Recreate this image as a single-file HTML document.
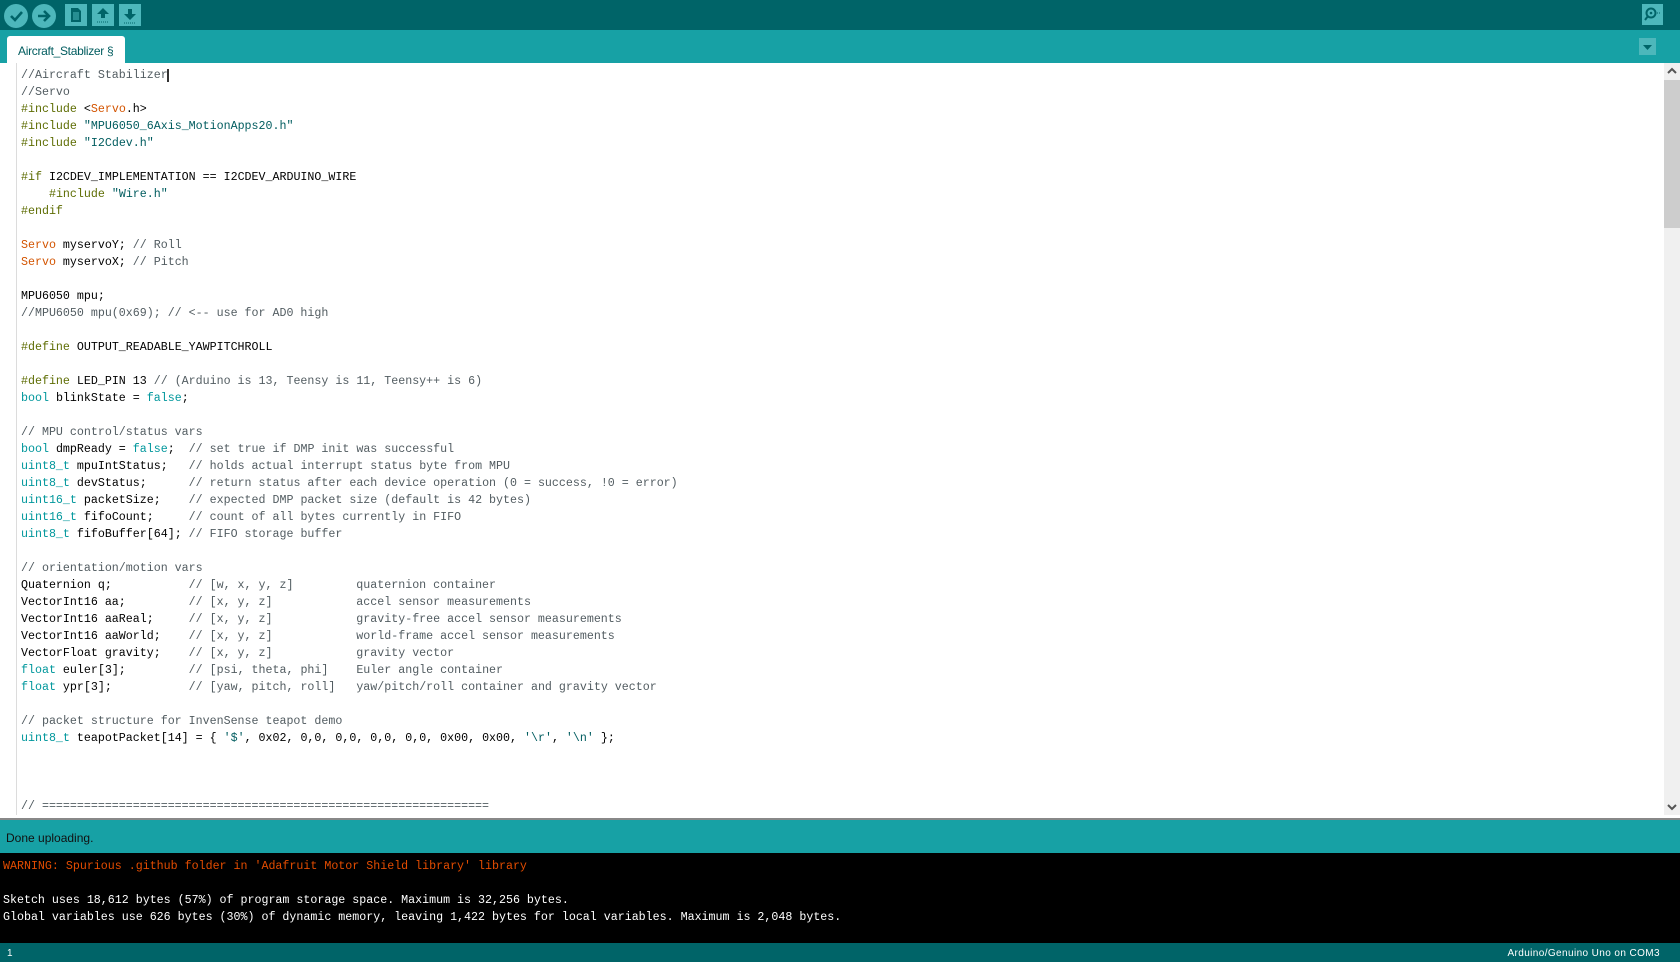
<!DOCTYPE html>
<html><head><meta charset="utf-8"><style>
*{margin:0;padding:0;box-sizing:border-box}
body{width:1680px;height:962px;overflow:hidden;background:#fff;font-family:"Liberation Sans",sans-serif;position:relative}
.tb{position:absolute;left:0;top:0;width:1680px;height:30px;background:#006468}
.btn{position:absolute;background:#4db7bb}
.tabs{position:absolute;left:0;top:30px;width:1680px;height:33px;background:#17a1a5}
.tab{position:absolute;left:7px;top:6px;width:118px;height:27px;background:#fff;border-radius:3px 3px 0 0;font-size:12px;color:#005c5f;padding:8px 0 0 11px;letter-spacing:-0.3px}
.ed{position:absolute;left:0;top:63px;width:1664px;height:752px;overflow:hidden}
.gut{position:absolute;left:16px;top:0;width:1px;height:752px;background:#dcdcdc}
pre{position:absolute;left:21px;top:4px;font-family:"Liberation Mono",monospace;font-size:11.65px;line-height:17px;color:#000}
.c{color:#525c61}.p{color:#5e6d03}.k{color:#00979c}.o{color:#d35400}.s{color:#005c5f}
.sb{position:absolute;left:1664px;top:63px;width:16px;height:752px;background:#f0f0f0}
.st{position:absolute;left:0;top:818px;width:1680px;height:35px;background:#17a1a5;border-top:2px solid #888;font-size:12px;color:#111;padding:11px 0 0 6px}
.con{position:absolute;left:0;top:853px;width:1680px;height:90px;background:#000}
.con pre{left:3px;top:5px;color:#fff}
.bb{position:absolute;left:0;top:943px;width:1680px;height:19px;background:#006468;color:#fff;font-size:10px}
</style></head><body>
<div class="tb">
<div class="btn" style="left:4px;top:4px;width:24px;height:24px;border-radius:50%"><svg width="24" height="24"><path d="M7 12l4 4 7-8" stroke="#006468" stroke-width="2.6" fill="none"/></svg></div>
<div class="btn" style="left:32px;top:4px;width:24px;height:24px;border-radius:50%"><svg width="24" height="24"><path d="M6 12h10M12 7l5 5-5 5" stroke="#006468" stroke-width="2.6" fill="none"/></svg></div>
<div class="btn" style="left:65px;top:4px;width:22px;height:22px"><svg width="22" height="22"><path d="M6 4h7l3 3v11H6z" fill="#006468"/><path d="M8 9h6M8 11h6M8 13h6M8 15h6" stroke="#4db7bb" stroke-width="1"/></svg></div>
<div class="btn" style="left:92px;top:4px;width:22px;height:22px"><svg width="22" height="22"><path d="M11 4l6 6h-4v4H9v-4H5z" fill="#006468"/><path d="M5 18h12" stroke="#006468" stroke-dasharray="1 1"/></svg></div>
<div class="btn" style="left:119px;top:4px;width:22px;height:22px"><svg width="22" height="22"><path d="M11 16l6-6h-4V5H9v5H5z" fill="#006468"/><path d="M5 19h12" stroke="#006468" stroke-dasharray="1 1"/></svg></div>
<div class="btn" style="left:1642px;top:4px;width:21px;height:21px"><svg width="21" height="21"><circle cx="9" cy="9" r="4.5" stroke="#006468" stroke-width="2" fill="none"/><circle cx="9" cy="9" r="1.3" fill="#006468"/><path d="M6 12l-3 4" stroke="#006468" stroke-width="2"/><path d="M15 9h4" stroke="#006468" stroke-dasharray="1 1"/></svg></div>
</div>
<div class="tabs"><div class="tab">Aircraft_Stablizer §</div>
<div class="btn" style="left:1639px;top:8px;width:17px;height:17px"><svg width="17" height="17"><path d="M4 7h9l-4.5 5z" fill="#006468"/></svg></div></div>
<div class="ed"><div class="gut"></div>
<pre><span class="c">//Aircraft Stabilizer</span><span style="border-left:2px solid #333;margin-left:-1px">&#8203;</span>
<span class="c">//Servo</span>
<span class="p">#include</span> &lt;<span class="o">Servo</span>.h&gt;
<span class="p">#include</span> <span class="s">"MPU6050_6Axis_MotionApps20.h"</span>
<span class="p">#include</span> <span class="s">"I2Cdev.h"</span>

<span class="p">#if</span> I2CDEV_IMPLEMENTATION == I2CDEV_ARDUINO_WIRE
    <span class="p">#include</span> <span class="s">"Wire.h"</span>
<span class="p">#endif</span>

<span class="o">Servo</span> myservoY; <span class="c">// Roll</span>
<span class="o">Servo</span> myservoX; <span class="c">// Pitch</span>

MPU6050 mpu;
<span class="c">//MPU6050 mpu(0x69); // &lt;-- use for AD0 high</span>

<span class="p">#define</span> OUTPUT_READABLE_YAWPITCHROLL

<span class="p">#define</span> LED_PIN 13 <span class="c">// (Arduino is 13, Teensy is 11, Teensy++ is 6)</span>
<span class="k">bool</span> blinkState = <span class="k">false</span>;

<span class="c">// MPU control/status vars</span>
<span class="k">bool</span> dmpReady = <span class="k">false</span>;  <span class="c">// set true if DMP init was successful</span>
<span class="k">uint8_t</span> mpuIntStatus;   <span class="c">// holds actual interrupt status byte from MPU</span>
<span class="k">uint8_t</span> devStatus;      <span class="c">// return status after each device operation (0 = success, !0 = error)</span>
<span class="k">uint16_t</span> packetSize;    <span class="c">// expected DMP packet size (default is 42 bytes)</span>
<span class="k">uint16_t</span> fifoCount;     <span class="c">// count of all bytes currently in FIFO</span>
<span class="k">uint8_t</span> fifoBuffer[64]; <span class="c">// FIFO storage buffer</span>

<span class="c">// orientation/motion vars</span>
Quaternion q;           <span class="c">// [w, x, y, z]         quaternion container</span>
VectorInt16 aa;         <span class="c">// [x, y, z]            accel sensor measurements</span>
VectorInt16 aaReal;     <span class="c">// [x, y, z]            gravity-free accel sensor measurements</span>
VectorInt16 aaWorld;    <span class="c">// [x, y, z]            world-frame accel sensor measurements</span>
VectorFloat gravity;    <span class="c">// [x, y, z]            gravity vector</span>
<span class="k">float</span> euler[3];         <span class="c">// [psi, theta, phi]    Euler angle container</span>
<span class="k">float</span> ypr[3];           <span class="c">// [yaw, pitch, roll]   yaw/pitch/roll container and gravity vector</span>

<span class="c">// packet structure for InvenSense teapot demo</span>
<span class="k">uint8_t</span> teapotPacket[14] = { <span class="s">'$'</span>, 0x02, 0,0, 0,0, 0,0, 0,0, 0x00, 0x00, <span class="s">'\r'</span>, <span class="s">'\n'</span> };



<span class="c">// ================================================================</span></pre>
</div>
<div class="sb"><svg width="16" height="16" style="position:absolute;top:0"><path d="M4 10l4-4 4 4" stroke="#555" stroke-width="2" fill="none"/></svg>
<div style="position:absolute;left:0;top:17px;width:16px;height:148px;background:#cdcdcd"></div>
<svg width="16" height="16" style="position:absolute;top:736px"><path d="M4 6l4 4 4-4" stroke="#555" stroke-width="2" fill="none"/></svg></div>
<div class="st">Done uploading.</div>
<div class="con"><pre><span style="color:#e34c00">WARNING: Spurious .github folder in 'Adafruit Motor Shield library' library</span>

Sketch uses 18,612 bytes (57%) of program storage space. Maximum is 32,256 bytes.
Global variables use 626 bytes (30%) of dynamic memory, leaving 1,422 bytes for local variables. Maximum is 2,048 bytes.</pre></div>
<div class="bb"><span style="position:absolute;left:7px;top:5px">1</span><span style="position:absolute;right:20px;top:5px;letter-spacing:0.4px">Arduino/Genuino Uno on COM3</span></div>
</body></html>
